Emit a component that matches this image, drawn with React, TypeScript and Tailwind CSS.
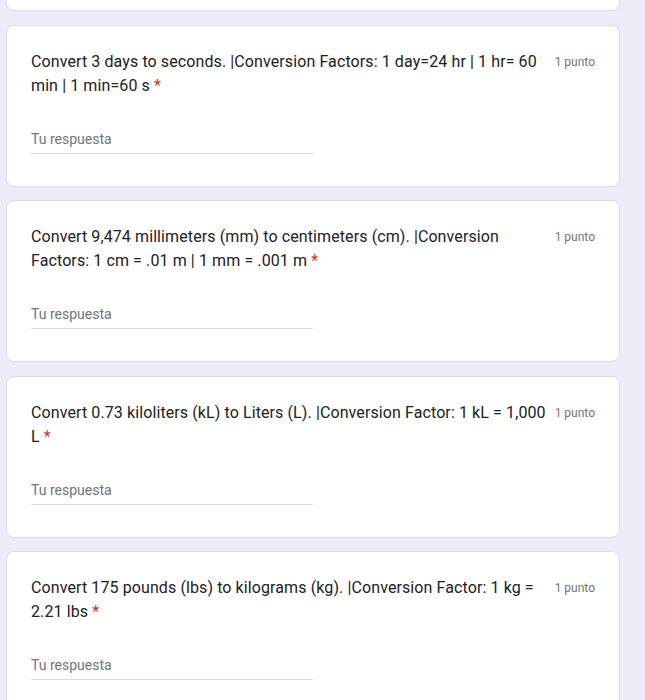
const questions = [
  { text: 'Convert 3 days to seconds. |Conversion Factors: 1 day=24 hr | 1 hr= 60 min | 1 min=60 s' },
  { text: 'Convert 9,474 millimeters (mm) to centimeters (cm). |Conversion Factors: 1 cm = .01 m | 1 mm = .001 m' },
  { text: 'Convert 0.73 kiloliters (kL) to Liters (L). |Conversion Factor: 1 kL = 1,000 L' },
  { text: 'Convert 175 pounds (lbs) to kilograms (kg). |Conversion Factor: 1 kg = 2.21 lbs' },
]

function QuestionCard({ text }: { text: string }) {
  return (
    <div className="h-[162px] shrink-0 bg-white border border-[#dadce0] rounded-lg px-6 pt-[24px]">
      <div className="flex items-start">
        <div className="flex-1 text-[16px] leading-6 text-[#202124] tracking-[0.1px]">
          {text} <span className="text-[#d93025]">*</span>
        </div>
        <div className="ml-2 pt-[2px] text-[12px] leading-5 text-[#70757a] whitespace-nowrap">1 punto</div>
      </div>
      <div className="mt-[31px] w-[282px] border-b border-[#dadce0] pb-[4px] text-[14px] leading-5 text-[#70757a]">
        Tu respuesta
      </div>
    </div>
  )
}

export default function App() {
  return (
    <div
      className="h-[700px] overflow-hidden bg-[#f0ebf8] pl-[6px] pr-[25px]"
      style={{ fontFamily: 'Roboto, "Liberation Sans", sans-serif' }}
    >
      <div className="-mt-[150px] flex flex-col gap-[13.5px]">
        <div className="h-[161px] shrink-0 bg-white border border-[#dadce0] rounded-lg" />
        {questions.map((q) => (
          <QuestionCard key={q.text} text={q.text} />
        ))}
      </div>
    </div>
  )
}
